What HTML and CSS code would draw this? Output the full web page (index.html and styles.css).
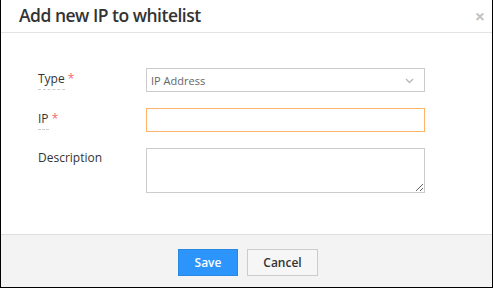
FILE: index.html
```html
<!DOCTYPE html>
<html>
<head>
<meta charset="utf-8">
<link rel="stylesheet" href="styles.css">
</head>
<body>
<div class="dialog">
  <div class="header">
    <div class="title">Add new IP to whitelist</div>
    <div class="close">&times;</div>
  </div>
  <div class="content">
    <div class="row">
      <div class="label"><span class="lbl u">Type</span> <span class="req">*</span></div>
      <div class="field select"><span>IP Address</span>
        <svg class="chev" width="9" height="6" viewBox="0 0 9 6"><path d="M1 1 L4.5 4.5 L8 1" fill="none" stroke="#bbb" stroke-width="1.5"/></svg>
      </div>
    </div>
    <div class="row">
      <div class="label"><span class="lbl u">IP</span> <span class="req">*</span></div>
      <div class="field input"></div>
    </div>
    <div class="row top">
      <div class="label"><span class="lbl">Description</span></div>
      <textarea class="field area"></textarea>
    </div>
  </div>
  <div class="footer">
    <button class="btn primary">Save</button>
    <button class="btn">Cancel</button>
  </div>
</div>
</body>
</html>
```
FILE: styles.css
```css
* { box-sizing: border-box; }
html, body { margin: 0; padding: 0; background: #fff; }
body { font-family: "Open Sans", "Noto Sans", sans-serif; color: #333; }
.dialog {
  width: 493px; height: 288px;
  border-left: 1px solid #000; border-right: 1px solid #000; border-bottom: 1px solid #000;
  display: flex; flex-direction: column;
}
.header {
  height: 33px; border-bottom: 1px solid #e3e3e3;
  display: flex; align-items: center; justify-content: space-between;
  padding: 0 7px 0 18px;
}
.title { font-size: 17.5px; font-weight: 600; color: #333; letter-spacing: -0.5px; margin-top: -2px; }
.close { font-size: 18px; font-weight: 700; color: #c4c4c4; line-height: 1; margin-top: -1px; }
.content { flex: 1; padding: 35px 67px 0 37px; display: flex; flex-direction: column; gap: 16px; }
.row { display: flex; align-items: center; }
.row.top { align-items: flex-start; }
.label { width: 108px; font-size: 12px; color: #333; margin-top: -3px; }
.row.top .label { padding-top: 1px; margin-top: 0; }
.lbl.u { border-bottom: 1px dashed #ccc; padding-bottom: 2px; }
.req { color: #f06a6a; }
.field { width: 279px; border: 1px solid #ccc; background: #fff; }
.select { height: 24px; display: flex; align-items: center; justify-content: space-between; padding: 0 10px 0 4px; font-size: 11px; color: #666; }
.chev { margin-top: 1px; }
.input { height: 24px; border-color: #fdb56c; }
.area { height: 45px; display: block; margin: 0; font: inherit; resize: both; }
.footer {
  height: 53px; background: #f3f3f3; border-top: 1px solid #dedede;
  display: flex; justify-content: center; align-items: center; gap: 9px;
  padding: 3px 0 0 3px;
}
.btn {
  height: 27px; font-family: "Open Sans", sans-serif; font-size: 12px; font-weight: 600;
  border: 1px solid #ccc; background: #f6f6f6; color: #333; padding: 0; width: 71px;
}
.btn.primary { width: 60px; background: #2c95fb; border-color: #2a88e3; color: #fff; }
```
